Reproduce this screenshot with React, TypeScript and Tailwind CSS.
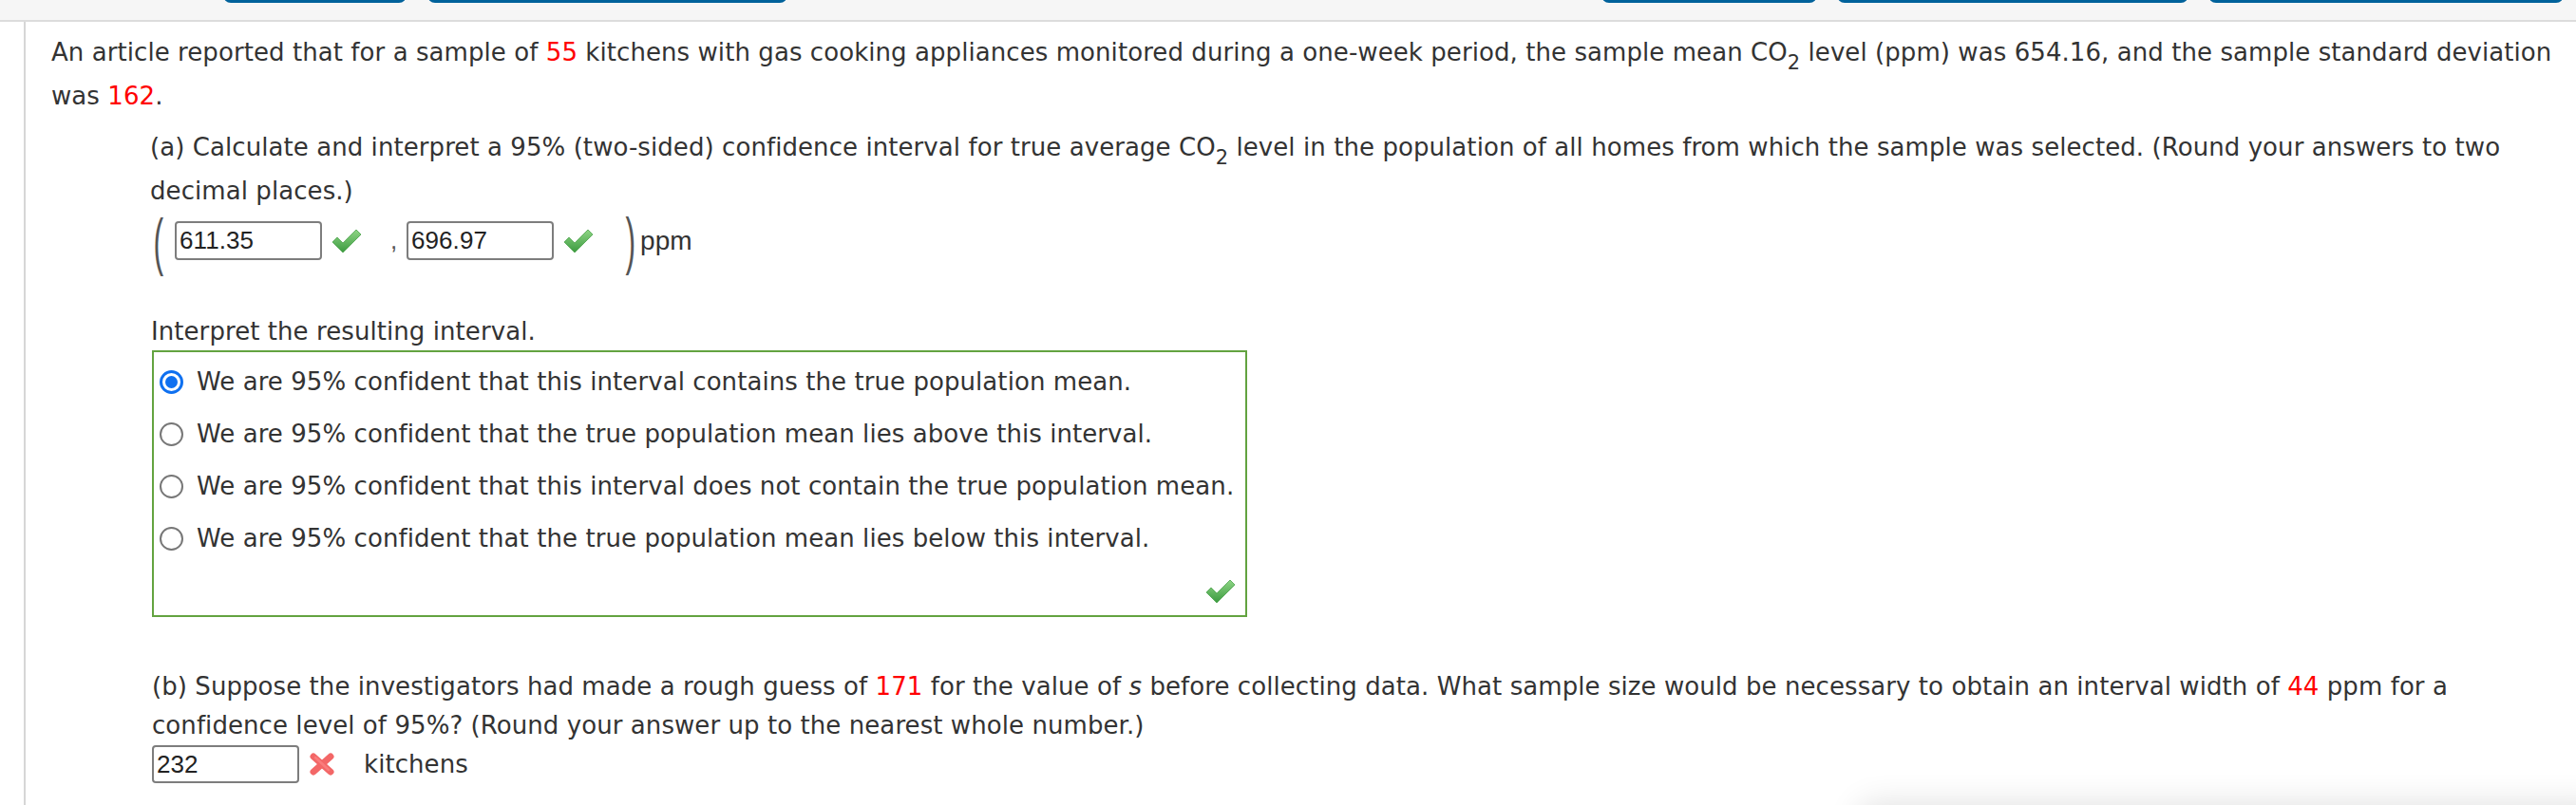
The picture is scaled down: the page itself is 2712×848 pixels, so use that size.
import React from "react";

const Red = ({ children }: { children: React.ReactNode }) => (
  <span className="text-[#ff0000]">{children}</span>
);

const Sub2 = () => (
  <sub className="relative -bottom-[9px] align-baseline text-[21px] leading-none">2</sub>
);

function Check() {
  return (
    <svg width="32" height="26" viewBox="0 0 32 26" className="shrink-0">
      <defs>
        <linearGradient id="ck" x1="0" y1="0" x2="0" y2="1">
          <stop offset="0" stopColor="#8fd585" />
          <stop offset="1" stopColor="#3b9a3f" />
        </linearGradient>
      </defs>
      <path d="M1 14 L6 9 L12 15 L26 1 L31 6 L12 25 Z" fill="url(#ck)" stroke="#4aa24a" strokeWidth="0.8" strokeLinejoin="round" />
    </svg>
  );
}

function Cross() {
  return (
    <svg width="28" height="26" viewBox="0 0 28 26" className="shrink-0">
      <g stroke="#f25b5b" strokeWidth="7" strokeLinecap="round" opacity="0.92">
        <line x1="5" y1="5" x2="23" y2="21" />
        <line x1="23" y1="5" x2="5" y2="21" />
      </g>
      <g stroke="#ff8b8b" strokeWidth="2.5" strokeLinecap="round" opacity="0.6">
        <line x1="7" y1="6" x2="21" y2="19" />
      </g>
    </svg>
  );
}

function Radio({ checked }: { checked?: boolean }) {
  if (checked) {
    return (
      <span className="flex h-[25px] w-[25px] shrink-0 items-center justify-center rounded-full border-[3px] border-[#0f70f0] bg-white">
        <span className="h-[13px] w-[13px] rounded-full bg-[#0f70f0]" />
      </span>
    );
  }
  return <span className="h-[25px] w-[25px] shrink-0 rounded-full border-2 border-[#777777] bg-white" />;
}

function Answer({ value, h = "h-[41px]" }: { value: string; h?: string }) {
  return (
    <div
      className={`w-[155px] ${h} flex shrink-0 items-center rounded-[4px] border-2 border-[#7d7d7d] bg-white pl-[3px] font-['Liberation_Sans',Arial,sans-serif] text-[26px] text-[#222]`}
    >
      {value}
    </div>
  );
}

function Paren({ side }: { side: "(" | ")" }) {
  return (
    <span className="inline-block w-[16px] scale-x-[0.55] scale-y-[1.15] text-center font-['Liberation_Sans',Arial,sans-serif] text-[58px] font-light leading-[59px] text-[#555]">
      {side}
    </span>
  );
}

const options = [
  "We are 95% confident that this interval contains the true population mean.",
  "We are 95% confident that the true population mean lies above this interval.",
  "We are 95% confident that this interval does not contain the true population mean.",
  "We are 95% confident that the true population mean lies below this interval.",
];

export default function App() {
  return (
    <div className="relative h-[848px] w-full overflow-hidden bg-white font-['Verdana','DejaVu_Sans',sans-serif] text-[26px] tracking-[0.07px] text-[#333333]">
      {/* toolbar, scrolled mostly out of view */}
      <div className="flex h-[23px] overflow-hidden border-b-2 border-[#dcdcdc] bg-[#f6f6f6] pl-[235px] pr-[13px]">
        <div className="flex gap-[22px]">
          <div className="-mt-[37px] h-[40px] w-[193px] rounded-lg bg-[#00629b]" />
          <div className="-mt-[37px] h-[40px] w-[379px] rounded-lg bg-[#00629b]" />
        </div>
        <div className="ml-auto flex gap-[21px]">
          <div className="-mt-[37px] h-[40px] w-[227px] rounded-lg bg-[#00629b]" />
          <div className="-mt-[37px] h-[40px] w-[370px] rounded-lg bg-[#00629b]" />
          <div className="-mt-[37px] h-[40px] w-[374px] rounded-lg bg-[#00629b]" />
        </div>
      </div>

      <div className="ml-[25px] h-[825px] border-l-2 border-[#d6d6d6] pl-[27px] pr-[10px] pt-[9px]">
        <p className="leading-[46px]">
          An article reported that for a sample of <Red>55</Red> kitchens with gas cooking appliances monitored
          during a one-week period, the sample mean CO<Sub2 /> level (ppm) was 654.16, and the sample standard
          deviation was <Red>162</Red>.
        </p>

        <div className="mt-[8px] pl-[104px]">
          <p className="leading-[46px]">
            (a) Calculate and interpret a 95% (two-sided) confidence interval for true average CO<Sub2 /> level in
            the population of all homes from which the sample was selected. (Round your answers to two decimal
            places.)
          </p>

          <div className="flex h-[59px] items-center">
            <Paren side="(" />
            <div className="ml-[10px]">
              <Answer value="611.35" />
            </div>
            <div className="ml-[10px]">
              <Check />
            </div>
            <span className="ml-[30px] w-[17px] font-['Liberation_Sans',Arial,sans-serif] text-[#555]">,</span>
            <Answer value="696.97" />
            <div className="ml-[10px]">
              <Check />
            </div>
            <div className="ml-[30px]">
              <Paren side=")" />
            </div>
            <span className="ml-[3px] font-['Liberation_Sans',Arial,sans-serif] text-[28px] text-[#333]">ppm</span>
          </div>

          <p className="mt-[46px] pl-[1px] leading-[40px]">Interpret the resulting interval.</p>

          <div className="ml-[2px] flex h-[281px] w-[1153px] flex-col border-2 border-[#63a340] pl-[6px] pr-[10px] pt-[4px] pb-[12px]">
            {options.map((o, i) => (
              <label key={o} className="flex h-[55px] items-center gap-[14px]">
                <Radio checked={i === 0} />
                <span>{o}</span>
              </label>
            ))}
            <div className="mt-auto flex justify-end">
              <Check />
            </div>
          </div>

          <p className="mt-[53px] pl-[2px] leading-[41px]">
            (b) Suppose the investigators had made a rough guess of <Red>171</Red> for the value of <i>s</i> before
            collecting data. What sample size would be necessary to obtain an interval width of <Red>44</Red> ppm
            for a confidence level of 95%? (Round your answer up to the nearest whole number.)
          </p>
          <div className="flex h-[40px] items-center pl-[2px]">
            <Answer value="232" h="h-[40px]" />
            <div className="ml-[10px]">
              <Cross />
            </div>
            <span className="ml-[30px]">kitchens</span>
          </div>
        </div>
      </div>

      {/* floating panel peeking at the bottom right */}
      <div className="absolute left-[1962px] top-[852px] h-[60px] w-[780px] rounded-t-xl bg-white shadow-[0_0_34px_6px_rgba(0,0,0,0.12)]" />
    </div>
  );
}
